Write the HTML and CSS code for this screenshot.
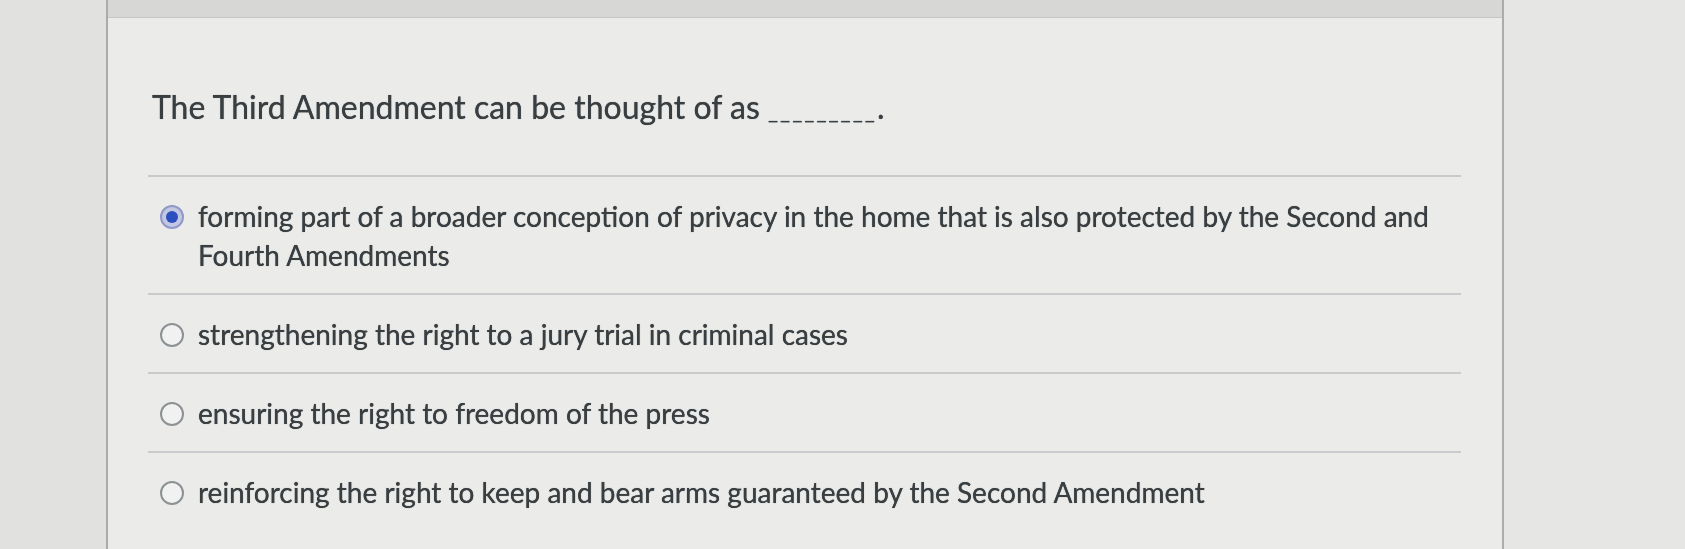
FILE: index.html
```html
<!DOCTYPE html>
<html lang="en">
<head>
<meta charset="utf-8">
<title>Question</title>
<link rel="stylesheet" href="styles.css">
</head>
<body>
<div class="page">
  <div class="side-left"></div>
  <div class="card">
    <div class="topbar"></div>
    <div class="content">
      <div class="question">The Third Amendment can be thought of as <span class="blank">_________</span>.</div>
      <div class="options">
        <div class="option">
          <span class="radio checked"><span class="dot"></span></span>
          <span class="label">forming part of a broader conception of privacy in the home that is also protected by the Second and Fourth Amendments</span>
        </div>
        <div class="option">
          <span class="radio"></span>
          <span class="label">strengthening the right to a jury trial in criminal cases</span>
        </div>
        <div class="option">
          <span class="radio"></span>
          <span class="label">ensuring the right to freedom of the press</span>
        </div>
        <div class="option">
          <span class="radio"></span>
          <span class="label">reinforcing the right to keep and bear arms guaranteed by the Second Amendment</span>
        </div>
      </div>
    </div>
  </div>
  <div class="side-right"></div>
</div>
</body>
</html>
```
FILE: styles.css
```css
html, body {
  margin: 0;
  padding: 0;
  background: #e3e4e2;
}
.page {
  display: flex;
  width: 1685px;
  height: 549px;
  overflow: hidden;
  font-family: Lato, "Open Sans", sans-serif;
  color: #393e41;
}
.side-left {
  width: 106px;
  flex: none;
  background: #e1e2e0;
}
.card {
  width: 1394px;
  flex: none;
  background: #ebebea;
  border-left: 2px solid #a8acad;
  border-right: 2px solid #a9adae;
  display: flex;
  flex-direction: column;
}
.topbar {
  height: 17px;
  background: #d7d8d6;
  border-bottom: 1px solid #c6c8c7;
}
.content {
  padding: 0 41px 0 40px;
  filter: blur(0.6px);
}
.question {
  font-size: 32px;
  line-height: 40px;
  padding: 69px 0 44px 4px;
  text-shadow: 0 0 0.7px #393e41;
}
.blank {
  font-size: 22px;
  letter-spacing: 2px;
}
.option {
  display: flex;
  align-items: flex-start;
  border-top: 2px solid #c8cacb;
  padding: 20px 0 18px 12px;
}
.radio {
  flex: none;
  width: 20px;
  height: 20px;
  border: 2px solid #8c9194;
  border-radius: 50%;
  background: #f1f1f1;
  margin-top: 8px;
  margin-right: 14px;
  display: flex;
  align-items: center;
  justify-content: center;
}
.radio.checked {
  border-color: #8f98c8;
  background: #c3c8e2;
}
.dot {
  width: 12px;
  height: 12px;
  border-radius: 50%;
  background: #2b4fbf;
}
.label {
  font-size: 28px;
  line-height: 39px;
  text-shadow: 0 0 0.7px #393e41;
}
.side-right {
  flex: 1;
  background: #e6e6e4;
}
```
